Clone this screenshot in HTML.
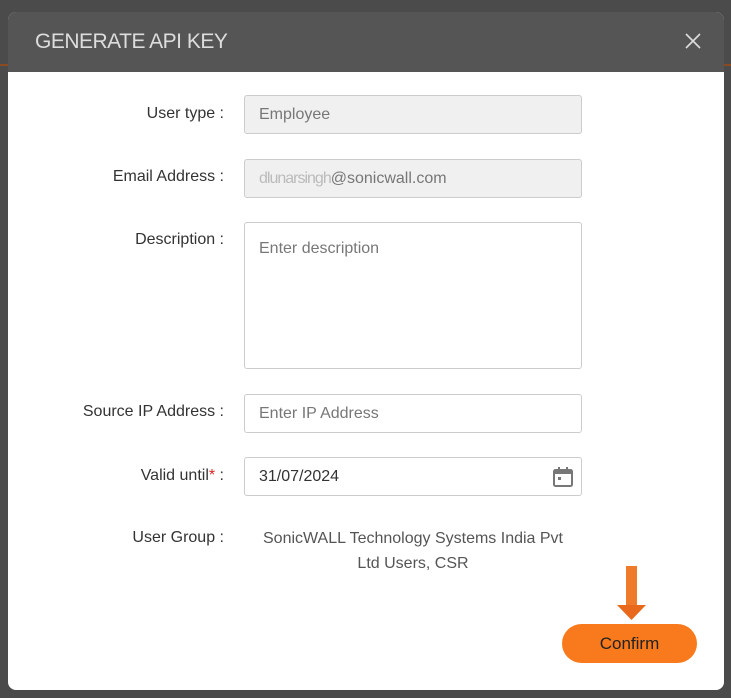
<!DOCTYPE html>
<html><head><style>
body{margin:0;width:731px;height:698px;background:#4b4b4b;font-family:"Liberation Sans",sans-serif;position:relative;overflow:hidden}
.m{position:absolute;left:8px;top:12px;width:716px;height:678px;background:#fff;border-radius:8px;overflow:hidden}
.h{height:60px;background:#555;color:#ddd;font-size:21px;line-height:60px;padding-left:27px;letter-spacing:-0.5px}
.x{position:absolute;right:22px;top:20px;width:18px;height:18px}
.l{position:absolute;right:500px;font-size:16px;color:#333;text-align:right;white-space:nowrap}
.i{position:absolute;left:236px;width:338px;border:1px solid #ccc;border-radius:3px;font-size:16px;color:#777;padding-left:14px;box-sizing:border-box}
.g{background:#f0f0f0}
</style></head><body>
<div style="position:absolute;left:0;top:64px;width:731px;height:2px;background:#8a4a22"></div>
<div class="m">
<div class="h">GENERATE API KEY</div>
<svg class="x" viewBox="0 0 18 18"><path d="M2 2L16 16M16 2L2 16" stroke="#ddd" stroke-width="1.6"/></svg>
<div class="l" style="top:93px">User type :</div>
<div class="i g" style="top:83px;height:39px;line-height:37px">Employee</div>
<div class="l" style="top:156px">Email Address :</div>
<div class="i g" style="top:147px;height:39px;line-height:37px"><span style="color:#bbb;letter-spacing:-1px">dlunarsingh</span>@sonicwall.com</div>
<div class="l" style="top:219px">Description :</div>
<div class="i" style="top:210px;height:147px;padding-top:17px">Enter description</div>
<div class="l" style="top:391px">Source IP Address :</div>
<div class="i" style="top:382px;height:39px;line-height:37px">Enter IP Address</div>
<div class="l" style="top:455px">Valid until<span style="color:#d22">*</span> :</div>
<div class="i" style="top:445px;height:39px;line-height:37px;color:#333">31/07/2024
<svg style="position:absolute;right:7px;top:8px" width="22" height="22" viewBox="0 0 22 22"><rect x="2" y="4" width="18" height="16" rx="1.5" fill="none" stroke="#777" stroke-width="2"/><rect x="2" y="4" width="18" height="4" fill="#777"/><rect x="6" y="1" width="2" height="5" fill="#777"/><rect x="14" y="1" width="2" height="5" fill="#777"/><rect x="6" y="11" width="3" height="3" fill="#777"/></svg></div>
<div class="l" style="top:517px">User Group :</div>
<div style="position:absolute;left:236px;width:338px;top:514px;font-size:16px;line-height:25px;color:#555;text-align:center">SonicWALL Technology Systems India Pvt<br>Ltd Users, CSR</div>
<svg style="position:absolute;left:609px;top:554px" width="30" height="56" viewBox="0 0 30 56"><rect x="9" y="0" width="11" height="40" fill="#ef7a2c"/><path d="M0 39H29L14.5 54Z" fill="#e8691c"/></svg>
<div style="position:absolute;left:554px;top:612px;width:135px;height:39px;border-radius:20px;background:#f97a1c;color:#222;font-size:17px;line-height:39px;text-align:center">Confirm</div>
</div>
</body></html>
